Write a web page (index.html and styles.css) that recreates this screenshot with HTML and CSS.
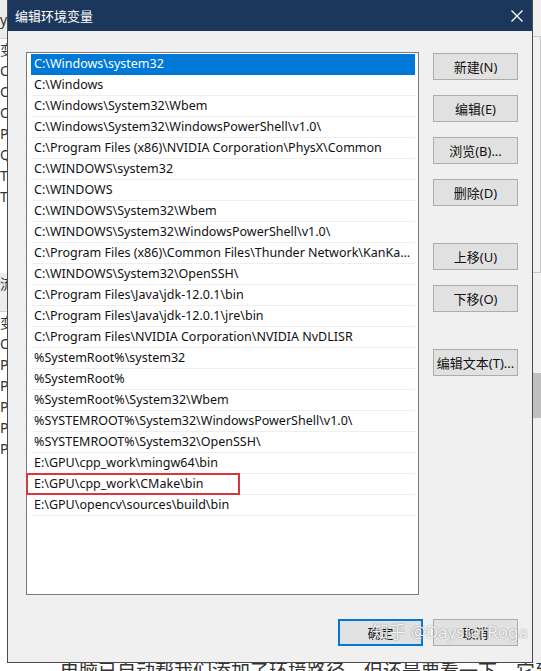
FILE: index.html
```html
<!DOCTYPE html>
<html lang="zh-CN">
<head>
    <meta charset="UTF-8">
    <title>编辑环境变量</title>
    <link rel="stylesheet" href="styles.css">
</head>
<body>

<div class="desk">
    <!-- window peeking out behind the dialog, left side -->
    <div class="side-left">
        <div class="bar">y</div>
        <div class="frag">变</div>
        <div class="frag">C</div>
        <div class="frag">O</div>
        <div class="frag">O</div>
        <div class="frag">Pa</div>
        <div class="frag">Q</div>
        <div class="frag">TE</div>
        <div class="frag">TM</div>
        <div class="frag tall">流</div>
        <div class="frag">变</div>
        <div class="frag">O</div>
        <div class="frag">Pa</div>
        <div class="frag">PA</div>
        <div class="frag">PF</div>
        <div class="frag">PF</div>
        <div class="frag">PF</div>
    </div>

    <div class="dialog">
        <div class="titlebar">
            <span class="title">编辑环境变量</span>
            <svg class="close" width="12" height="12" viewBox="0 0 12 12">
                <path d="M0.5 0.5 L11.5 11.5 M11.5 0.5 L0.5 11.5" stroke="#fff" stroke-width="1.3" fill="none"/>
            </svg>
        </div>

        <div class="body">
            <div class="main">
                <div class="pathlist">
                    <div class="row selected">C:\Windows\system32</div>
                    <div class="row">C:\Windows</div>
                    <div class="row">C:\Windows\System32\Wbem</div>
                    <div class="row">C:\Windows\System32\WindowsPowerShell\v1.0\</div>
                    <div class="row">C:\Program Files (x86)\NVIDIA Corporation\PhysX\Common</div>
                    <div class="row">C:\WINDOWS\system32</div>
                    <div class="row">C:\WINDOWS</div>
                    <div class="row">C:\WINDOWS\System32\Wbem</div>
                    <div class="row">C:\WINDOWS\System32\WindowsPowerShell\v1.0\</div>
                    <div class="row">C:\Program Files (x86)\Common Files\Thunder Network\KanKan\Codecs</div>
                    <div class="row">C:\WINDOWS\System32\OpenSSH\</div>
                    <div class="row">C:\Program Files\Java\jdk-12.0.1\bin</div>
                    <div class="row">C:\Program Files\Java\jdk-12.0.1\jre\bin</div>
                    <div class="row">C:\Program Files\NVIDIA Corporation\NVIDIA NvDLISR</div>
                    <div class="row">%SystemRoot%\system32</div>
                    <div class="row">%SystemRoot%</div>
                    <div class="row">%SystemRoot%\System32\Wbem</div>
                    <div class="row">%SYSTEMROOT%\System32\WindowsPowerShell\v1.0\</div>
                    <div class="row">%SYSTEMROOT%\System32\OpenSSH\</div>
                    <div class="row">E:\GPU\cpp_work\mingw64\bin</div>
                    <div class="row marked"><span class="mark">E:\GPU\cpp_work\CMake\bin</span></div>
                    <div class="row">E:\GPU\opencv\sources\build\bin</div>
                </div>

                <div class="actions">
                    <button class="btn">新建(N)</button>
                    <button class="btn">编辑(E)</button>
                    <button class="btn">浏览(B)...</button>
                    <button class="btn">删除(D)</button>
                    <button class="btn gap-lg">上移(U)</button>
                    <button class="btn">下移(O)</button>
                    <button class="btn gap-lg">编辑文本(T)...</button>
                </div>
            </div>

            <div class="footer">
                <button class="btn default">确定</button>
                <button class="btn">取消</button>
            </div>

            <div class="watermark">知乎 @DaystarRoga</div>
        </div>
    </div>

    <!-- window peeking out on the right -->
    <div class="side-right">
        <div class="strip s1"></div>
        <div class="strip s2"></div>
        <div class="thumb"></div>
    </div>
</div>

<div class="below">
    <p>电脑已自动帮我们添加了环境路径，但还是要看一下，它到底添加</p>
</div>

</body>
</html>
```

FILE: styles.css
```css
body {
    margin: 0;
    width: 541px;
    height: 671px;
    overflow: hidden;
    background-color: #fff;
    font-family: "Noto Sans", "Noto Sans CJK SC", sans-serif;
    font-size: 13px;
    color: #000;
}

.desk {
    display: flex;
    height: 663px;
}

/* Left background window */
.side-left {
    width: 7px;
    overflow: hidden;
    background-color: #fff;
    font-size: 14px;
    color: #333;
    white-space: nowrap;
}
.side-left .bar {
    height: 38px;
    line-height: 40px;
    background-color: #ececec;
    border-bottom: 1px solid #d0d0d0;
}
.side-left .frag {
    height: 21px;
    line-height: 21px;
}
.side-left .tall {
    margin-top: 66px;
    height: 38px;
    background-color: #ececec;
    border-bottom: 1px solid #d0d0d0;
}

/* Dialog */
.dialog {
    width: 524px;
    display: flex;
    flex-direction: column;
    border: 1px solid #4a4a4a;
    border-top: none;
    background-color: #f0f0f0;
}
.titlebar {
    height: 31px;
    display: flex;
    align-items: center;
    justify-content: space-between;
    padding: 0 9px 0 7px;
    background-color: #1b375b;
    color: #fff;
}
.title {
    font-size: 13px;
}

.body {
    position: relative;
    flex: 1;
    display: flex;
    flex-direction: column;
    padding: 21px 14px 0 18px;
}
.main {
    display: flex;
    gap: 14px;
}

/* Path list */
.pathlist {
    width: 384px;
    height: 540px;
    padding: 1px 3px 0 4px;
    border: 1px solid #7a7a7a;
    background-color: #fff;
}
.row {
    height: 20px;
    line-height: 20px;
    padding: 0 3px;
    border-bottom: 1px solid #efefef;
    font-size: 12.5px;
    white-space: nowrap;
    overflow: hidden;
    text-overflow: ellipsis;
    color: #111;
}
.row.selected {
    background-color: #0078d7;
    color: #fff;
    border-bottom-color: #0078d7;
}
.row.marked {
    overflow: visible;
}
.mark {
    display: inline-block;
    width: 204px;
    margin-left: -8px;
    padding-left: 6px;
    height: 18px;
    line-height: 18px;
    border: 2px solid #d9363e;
    margin-top: -1px;
}

/* Buttons */
.actions {
    display: flex;
    flex-direction: column;
    gap: 15px;
    padding-top: 1px;
}
.btn {
    width: 85px;
    height: 27px;
    padding: 0;
    font-family: "Noto Sans", "Noto Sans CJK SC", sans-serif;
    font-size: 13px;
    color: #111;
    background-color: #e1e1e1;
    border: 1px solid #adadad;
}
.actions .gap-lg {
    margin-top: 22px;
}
.footer {
    display: flex;
    justify-content: flex-end;
    gap: 10px;
    margin-top: 24px;
}
.btn.default {
    border: 2px solid #0078d7;
}

.watermark {
    position: absolute;
    right: 4px;
    bottom: 19px;
    font-size: 17px;
    color: rgba(255, 255, 255, 0.92);
    text-shadow: 0 0 1px rgba(0, 0, 0, 0.35), 0 0 2px rgba(0, 0, 0, 0.2);
}

/* Right background window */
.side-right {
    width: 8px;
    display: flex;
    flex-direction: column;
    background-color: #f0f0f0;
}
.strip {
    border-bottom: 1px solid #c8c8c8;
}
.s1 {
    height: 36px;
}
.s2 {
    height: 235px;
    border-right: 1px solid #c8c8c8;
}
.thumb {
    margin-top: 100px;
    height: 45px;
    background-color: #c0c0c0;
}

/* Text of the page behind */
.below {
    height: 8px;
    overflow: hidden;
}
.below p {
    margin: -7px 0 0 60px;
    font-size: 19px;
    color: #333;
    white-space: nowrap;
}
```
